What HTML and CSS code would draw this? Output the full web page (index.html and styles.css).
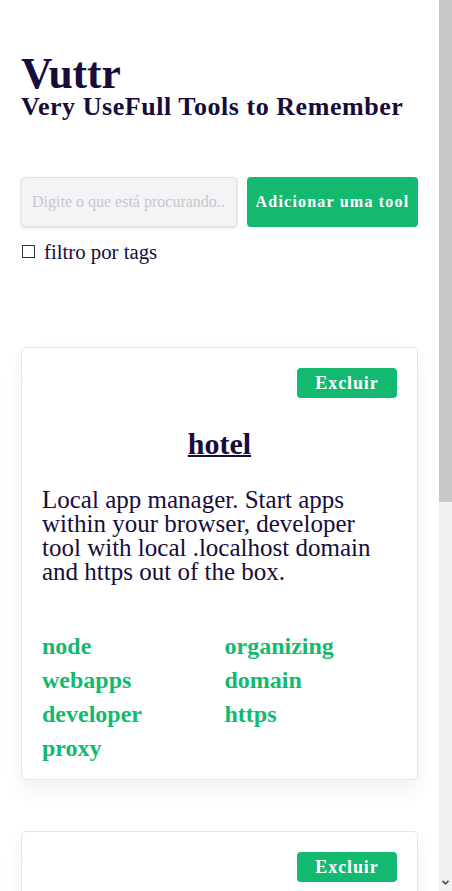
FILE: index.html
```html
<!DOCTYPE html>
<html lang="pt-BR">
<head>
<meta charset="utf-8">
<title>Vuttr</title>
<link rel="stylesheet" href="styles.css">
</head>
<body>
<main class="page">
  <header class="header">
    <h1 class="title">Vuttr</h1>
    <h2 class="subtitle">Very UseFull Tools to Remember</h2>
  </header>

  <section class="toolbar">
    <div class="search-row">
      <input class="search" type="text" placeholder="Digite o que está procurando...">
      <button class="btn btn-add" type="button">Adicionar uma tool</button>
    </div>
    <label class="filter">
      <input class="filter-check" type="checkbox">
      <span>filtro por tags</span>
    </label>
  </section>

  <section class="list">
    <article class="card">
      <div class="card-top">
        <button class="btn btn-del" type="button">Excluir</button>
      </div>
      <h3 class="card-title"><a href="#">hotel</a></h3>
      <p class="card-desc">Local app manager. Start apps within your browser, developer tool with local .localhost domain and https out of the box.</p>
      <ul class="tags">
        <li>node</li>
        <li>organizing</li>
        <li>webapps</li>
        <li>domain</li>
        <li>developer</li>
        <li>https</li>
        <li>proxy</li>
      </ul>
    </article>

    <article class="card">
      <div class="card-top">
        <button class="btn btn-del" type="button">Excluir</button>
      </div>
      <h3 class="card-title"><a href="#">json-server</a></h3>
      <p class="card-desc">Fake REST API based on a json schema. Useful for mocking and creating APIs for front-end devs to consume in coding challenges.</p>
      <ul class="tags">
        <li>api</li>
        <li>json</li>
        <li>schema</li>
        <li>node</li>
        <li>github</li>
        <li>rest</li>
      </ul>
    </article>
  </section>
</main>

<div class="scrollbar" aria-hidden="true">
  <div class="scroll-thumb"></div>
  <svg class="scroll-arrow" width="7" height="5" viewBox="0 0 7 5">
    <path d="M0.5 0.8 L3.5 3.8 L6.5 0.8" fill="none" stroke="#505050" stroke-width="1.6"/>
  </svg>
</div>
</body>
</html>
```

FILE: styles.css
```css
html, body {
  margin: 0;
  padding: 0;
  background: #ffffff;
}

body {
  font-family: "Liberation Serif", "Times New Roman", serif;
  color: #170c3a;
}

.page {
  box-sizing: border-box;
  width: 439px;
  padding: 51px 21px 120px 21px;
}

.header {
  margin: 0;
}

.title {
  margin: 0;
  font-size: 43.5px;
  line-height: 44px;
  font-weight: 700;
}

.subtitle {
  margin: 0;
  font-size: 26px;
  line-height: 24px;
  font-weight: 700;
  letter-spacing: 0.55px;
}

.toolbar {
  margin-top: 58px;
}

.search-row {
  display: flex;
  gap: 10px;
}

.search {
  box-sizing: border-box;
  width: 216px;
  height: 50px;
  margin: 0;
  padding: 0 10px;
  border: 1px solid #e2e0e6;
  border-radius: 4px;
  background: #f4f4f6;
  box-shadow: 0 1px 3px rgba(0, 0, 0, 0.15);
  font-family: "Liberation Serif", serif;
  font-size: 16px;
  color: #170c3a;
  outline: none;
}

.search::placeholder {
  color: #c9c5cd;
}

.btn {
  border: none;
  background: #12b96f;
  color: #ffffff;
  font-family: "Liberation Serif", serif;
  font-weight: 700;
  cursor: pointer;
  padding: 0;
}

.btn-add {
  width: 171px;
  height: 50px;
  border-radius: 4px;
  font-size: 16px;
  letter-spacing: 1.2px;
}

.filter {
  display: flex;
  align-items: center;
  gap: 9px;
  margin-top: 13px;
  font-size: 20.8px;
  line-height: 24px;
}

.filter-check {
  -webkit-appearance: none;
  appearance: none;
  box-sizing: border-box;
  width: 13px;
  height: 13px;
  margin: -2px 0 0 1px;
  border: 1px solid #333333;
  border-radius: 0;
  background: #ffffff;
}

.list {
  margin-top: 83px;
  display: flex;
  flex-direction: column;
  gap: 51px;
}

.card {
  border: 1px solid #e6e6e6;
  border-radius: 5px;
  padding: 20px 20px 14px 20px;
  background: #ffffff;
  box-shadow: 0 10px 20px rgba(0, 0, 0, 0.06);
}

.card-top {
  display: flex;
  justify-content: flex-end;
}

.btn-del {
  width: 100px;
  height: 30px;
  border-radius: 4px;
  font-size: 18px;
  letter-spacing: 0.9px;
}

.card-title {
  margin: 29px 0 0 0;
  text-align: center;
  font-size: 30px;
  line-height: 34px;
  font-weight: 700;
}

.card-title a {
  color: #170c3a;
  text-decoration: underline;
  text-decoration-thickness: 2px;
}

.card-desc {
  margin: 27px 10px 0 0;
  font-size: 25px;
  line-height: 24px;
}

.tags {
  list-style: none;
  margin: 45px 0 0 0;
  padding: 0;
  display: grid;
  grid-template-columns: 1fr 1fr;
  column-gap: 10px;
  font-size: 24px;
  line-height: 34px;
  font-weight: 700;
  color: #12b96f;
}

.scrollbar {
  position: fixed;
  top: 0;
  right: 0;
  width: 13px;
  height: 100vh;
  background: #f1f1f1;
}

.scroll-thumb {
  height: 502px;
  background: #c8c8c8;
}

.scroll-arrow {
  position: absolute;
  left: 3px;
  bottom: 6px;
}
```
